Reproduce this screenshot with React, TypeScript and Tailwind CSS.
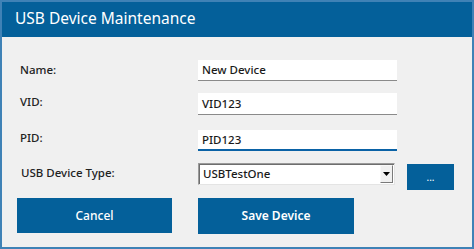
export default function App() {
  const font = { fontFamily: '"Noto Sans", "Open Sans", sans-serif' };

  return (
    <div
      className="w-[474px] h-[249px] bg-[#f0f0f0] border-2 border-[#3f82b6] flex flex-col"
      style={font}
    >
      <div className="h-[35px] bg-[#04609a] flex items-center px-[13px] pb-[1px] text-white text-[15.5px] leading-none">
        USB Device Maintenance
      </div>

      <div className="flex flex-col pl-[15px] pt-[23px]">
        {/* Name */}
        <div className="flex items-center h-[21px]">
          <label className="w-[181px] pl-[3px] pb-[2px] text-[11.5px] font-medium text-[#222]">
            Name:
          </label>
          <div className="w-[199px] h-[21px] bg-white border-b border-[#8a8a8a] flex items-center pl-[4px] text-[11.5px] font-medium text-[#1a1a1a]">
            New Device
          </div>
        </div>

        {/* VID */}
        <div className="flex items-center h-[22px] mt-[12px]">
          <label className="w-[181px] pl-[3px] pb-[5px] text-[11.5px] font-medium text-[#222]">
            VID:
          </label>
          <div className="w-[199px] h-[22px] bg-white border-b border-[#8a8a8a] flex items-center pl-[4px] text-[11.5px] font-medium text-[#1a1a1a]">
            VID123
          </div>
        </div>

        {/* PID */}
        <div className="flex items-center h-[21px] mt-[15px]">
          <label className="w-[181px] pl-[3px] pb-[6px] text-[11.5px] font-medium text-[#222]">
            PID:
          </label>
          <div className="w-[199px] h-[21px] bg-white border-b-2 border-[#0a62a6] flex items-center pl-[4px] text-[11.5px] font-medium text-[#1a1a1a]">
            PID123
          </div>
        </div>

        {/* USB Device Type */}
        <div className="flex items-center h-[27px] mt-[12px]">
          <label className="w-[181px] pl-[4px] pb-[8px] text-[11.5px] font-medium text-[#222]">
            USB Device Type:
          </label>
          <div className="self-start w-[197px] h-[22px] bg-white border border-t-[#9a9a9a] border-l-[#9a9a9a] border-b-[#e4e4e4] border-r-[#e4e4e4] shadow-[inset_1px_1px_0_#6e6e6e] flex items-center">
            <span className="flex-1 pl-[4px] text-[11.5px] font-medium text-[#1a1a1a]">
              USBTestOne
            </span>
            <div className="w-[13px] h-[18px] mr-[1px] bg-[#f0f0f0] border border-t-[#f8f8f8] border-l-[#f8f8f8] border-b-[#7a7a7a] border-r-[#7a7a7a] flex items-center justify-center">
              <svg width="7" height="4" viewBox="0 0 7 4">
                <path d="M0 0h7L3.5 4z" fill="#000" />
              </svg>
            </div>
          </div>
          <button className="ml-[12px] w-[47px] h-[26px] bg-[#04609a] text-white text-[10px] leading-none flex items-center justify-center">
            ...
          </button>
        </div>

        {/* Buttons */}
        <div className="flex mt-[8px]">
          <button className="w-[155px] h-[35px] bg-[#04609a] text-white text-[12px] font-medium">
            Cancel
          </button>
          <button className="ml-[26px] w-[156px] h-[36px] bg-[#04609a] text-white text-[12px] font-semibold">
            Save Device
          </button>
        </div>
      </div>
    </div>
  );
}
